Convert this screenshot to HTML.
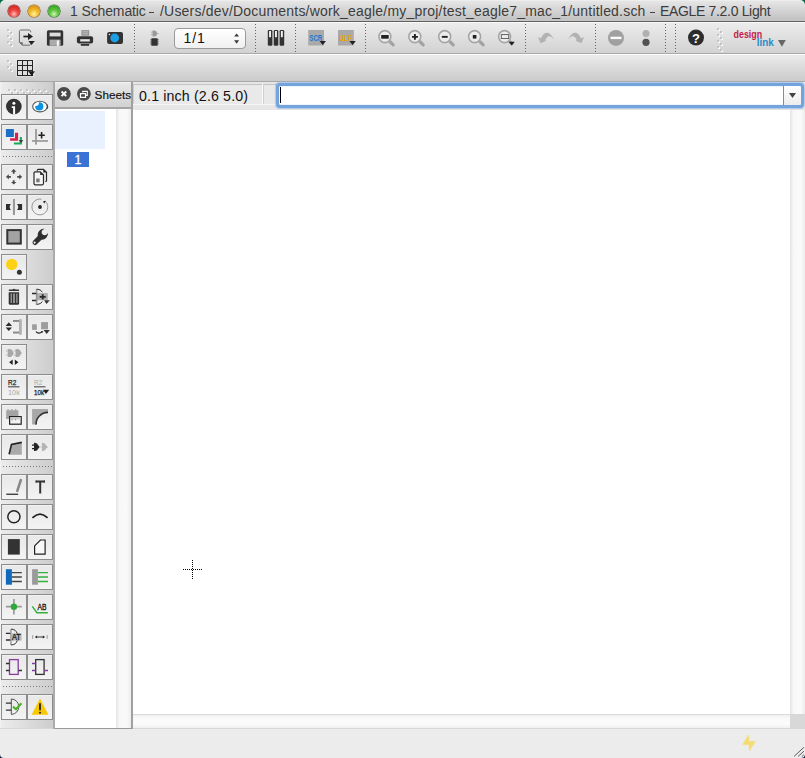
<!DOCTYPE html>
<html><head><meta charset="utf-8"><style>
*{margin:0;padding:0;box-sizing:border-box}
html,body{width:805px;height:758px;overflow:hidden;background:#d8d8d8;font-family:"Liberation Sans", sans-serif}
.a{position:absolute}
.b{position:absolute;width:26px;height:26px;border:1px solid #8c8c8c;background:linear-gradient(#fbfbfb 0,#e9e9e9 1px,#ececec 40%,#f4f4f4 100%)}
.tt{top:2px;font-size:14px;line-height:18px;color:#3c3c3c;white-space:nowrap}
.b svg{position:absolute;left:-1px;top:-1px}
</style></head><body>
<div class="a" style="left:0;top:0;width:5px;height:5px;background:#006a44"></div>
<div class="a" style="left:800px;top:0;width:5px;height:5px;background:#006a44"></div>
<div class="a" style="left:0;top:753px;width:5px;height:5px;background:#0a1e3a"></div>
<div class="a" style="left:800px;top:753px;width:5px;height:5px;background:#0a1e3a"></div>
<div class="a" style="left:0;top:729px;width:805px;height:29px;background:#ececec;border-radius:0 0 4px 4px"></div>
<!-- title bar -->
<div class="a" style="left:0;top:0;width:805px;height:21px;background:linear-gradient(#f4f4f4 0,#e6e6e6 1px,#c2c2c2 95%,#cccccc 100%);border-radius:5px 5px 0 0"></div>
<div class="a" style="left:0;top:21px;width:805px;height:1px;background:#5f5f5f"></div>
<div class="a" style="left:8px;top:5px;width:12px;height:12px;border-radius:50%;background:radial-gradient(circle at 50% 75%,#ffc0c0 0,#f04a44 35%,#c8201c 85%);box-shadow:0 0 0 0.6px #8a2a28"></div>
<div class="a" style="left:28px;top:5px;width:12px;height:12px;border-radius:50%;background:radial-gradient(circle at 50% 75%,#fff4a8 0,#f5c030 35%,#d08a12 85%);box-shadow:0 0 0 0.6px #906010"></div>
<div class="a" style="left:48px;top:5px;width:12px;height:12px;border-radius:50%;background:radial-gradient(circle at 50% 75%,#d0f8b8 0,#66c845 35%,#2d9a20 85%);box-shadow:0 0 0 0.6px #2a6a20"></div>
<div class="a tt" style="left:70px;letter-spacing:-0.12px">1 Schematic</div>
<div class="a" style="left:148.6px;top:12.2px;width:5.2px;height:1.2px;background:#444"></div>
<div class="a tt" style="left:160px;letter-spacing:0.2px">/Users/dev/Documents/work_eagle/my_proj/test_eagle7_mac_1/untitled.sch</div>
<div class="a" style="left:650px;top:12.2px;width:5.2px;height:1.2px;background:#444"></div>
<div class="a tt" style="left:660px;letter-spacing:-0.33px">EAGLE 7.2.0 Light</div>
<!-- toolbar 1 -->
<div class="a" style="left:0;top:22px;width:805px;height:31px;background:linear-gradient(#fbfbfb 0,#fbfbfb 1px,#ececec 1px,#d2d2d2 100%)"></div>
<div class="a" style="left:0;top:53px;width:805px;height:1px;background:#a9a9a9"></div>
<div style="position:absolute;left:134px;top:24px;width:1px;height:28px;background:repeating-linear-gradient(180deg,#666 0 1px,transparent 1px 3px)"></div><div style="position:absolute;left:255px;top:24px;width:1px;height:28px;background:repeating-linear-gradient(180deg,#666 0 1px,transparent 1px 3px)"></div><div style="position:absolute;left:295px;top:24px;width:1px;height:28px;background:repeating-linear-gradient(180deg,#666 0 1px,transparent 1px 3px)"></div><div style="position:absolute;left:365px;top:24px;width:1px;height:28px;background:repeating-linear-gradient(180deg,#666 0 1px,transparent 1px 3px)"></div><div style="position:absolute;left:525px;top:24px;width:1px;height:28px;background:repeating-linear-gradient(180deg,#666 0 1px,transparent 1px 3px)"></div><div style="position:absolute;left:595px;top:24px;width:1px;height:28px;background:repeating-linear-gradient(180deg,#666 0 1px,transparent 1px 3px)"></div><div style="position:absolute;left:665px;top:24px;width:1px;height:28px;background:repeating-linear-gradient(180deg,#666 0 1px,transparent 1px 3px)"></div><div style="position:absolute;left:675px;top:24px;width:1px;height:28px;background:repeating-linear-gradient(180deg,#666 0 1px,transparent 1px 3px)"></div>
<div style="position:absolute;left:7px;top:29px;width:2px;height:2px;background:#c4c4c4;box-shadow:1px 1px 0 #fafafa"></div><div style="position:absolute;left:10px;top:32px;width:2px;height:2px;background:#c4c4c4;box-shadow:1px 1px 0 #fafafa"></div><div style="position:absolute;left:7px;top:35px;width:2px;height:2px;background:#c4c4c4;box-shadow:1px 1px 0 #fafafa"></div><div style="position:absolute;left:10px;top:38px;width:2px;height:2px;background:#c4c4c4;box-shadow:1px 1px 0 #fafafa"></div><div style="position:absolute;left:7px;top:41px;width:2px;height:2px;background:#c4c4c4;box-shadow:1px 1px 0 #fafafa"></div><div style="position:absolute;left:10px;top:44px;width:2px;height:2px;background:#c4c4c4;box-shadow:1px 1px 0 #fafafa"></div>
<div style="position:absolute;left:717px;top:28px;width:2px;height:2px;background:#c4c4c4;box-shadow:1px 1px 0 #fafafa"></div><div style="position:absolute;left:720px;top:31px;width:2px;height:2px;background:#c4c4c4;box-shadow:1px 1px 0 #fafafa"></div><div style="position:absolute;left:717px;top:34px;width:2px;height:2px;background:#c4c4c4;box-shadow:1px 1px 0 #fafafa"></div><div style="position:absolute;left:720px;top:37px;width:2px;height:2px;background:#c4c4c4;box-shadow:1px 1px 0 #fafafa"></div><div style="position:absolute;left:717px;top:40px;width:2px;height:2px;background:#c4c4c4;box-shadow:1px 1px 0 #fafafa"></div><div style="position:absolute;left:720px;top:43px;width:2px;height:2px;background:#c4c4c4;box-shadow:1px 1px 0 #fafafa"></div><div style="position:absolute;left:717px;top:46px;width:2px;height:2px;background:#c4c4c4;box-shadow:1px 1px 0 #fafafa"></div><div style="position:absolute;left:720px;top:49px;width:2px;height:2px;background:#c4c4c4;box-shadow:1px 1px 0 #fafafa"></div>
<div class="a" style="left:174px;top:28px;width:72px;height:21px;border:1px solid #9a9a9a;border-radius:4px;background:linear-gradient(#ffffff,#f0f0f0)"></div>
<div class="a" style="left:183.5px;top:28.5px;font-size:14px;letter-spacing:0.9px;line-height:18px;color:#111">1/1</div>
<svg class="a" style="left:230px;top:31px" width="12" height="14"><path d="M4.1 5.5h5l-2.5-2.9z M4.1 9.2h5l-2.5 3.5z" fill="#3a3a3a"/></svg>

<svg style="position:absolute;left:0;top:22px" width="805" height="31" viewBox="0 22 805 31">
 <!-- open -->
 <path d="M30.6 32.3v-1.2l-1-1.1h-9.2l-1 1.2v11l3 3h7.4l0.8-0.8" fill="none" stroke="#6a6a6a" stroke-width="1"/>
 <path d="M19.3 42.2l3.4 3.3v-3.3z" fill="#666"/>
 <path d="M23.4 36.5h5.2" stroke="#222" stroke-width="1.7"/><path d="M28 33l5 3.5-5 3.6z" fill="#222"/>
 <path d="M28.3 41.1h6.5l-3.3 3.9z" fill="#222"/>
 <!-- save -->
 <rect x="46.9" y="30.2" width="16.3" height="15.6" rx="1.6" fill="#333"/>
 <rect x="49.6" y="32.6" width="11" height="3.8" fill="#dcdcdc"/>
 <rect x="49.6" y="39.6" width="11" height="6.2" fill="#ababab"/><rect x="56.8" y="40.4" width="2.2" height="5.4" fill="#f4f4f4"/>
 <!-- print -->
 <rect x="81.4" y="30.2" width="7.8" height="5.5" fill="#8a8a8a"/><rect x="82.3" y="31.4" width="6" height="1" fill="#c8c8c8"/><rect x="82.3" y="33.4" width="6" height="1" fill="#c8c8c8"/>
 <rect x="76.9" y="36.3" width="16.2" height="7.3" rx="2" fill="#333"/>
 <rect x="80.2" y="39.2" width="9.6" height="2.3" fill="#e8e8e8"/>
 <rect x="80.8" y="44" width="8.4" height="1.8" fill="#333"/>
 <!-- camera -->
 <rect x="107.1" y="32" width="15.9" height="11.9" rx="2" fill="#333"/><circle cx="114.7" cy="38" r="4.4" fill="#1e9fe4"/><circle cx="109.4" cy="34.5" r="0.8" fill="#e8e8e8"/>
 <!-- switch -->
 <path d="M152.5 30.5h1.5a3 3 0 0 1 0 6h-1.5z" fill="#999"/><path d="M150.8 32.2h1.7M150.8 34.8h1.7M157 33.5h1.5" stroke="#999" stroke-width="0.8"/>
 <rect x="151.3" y="38.2" width="6.4" height="7.6" rx="0.6" fill="#333"/><path d="M150.3 39.8h1M150.3 41.8h1M150.3 43.8h1M157.7 39.8h1M157.7 41.8h1M157.7 43.8h1" stroke="#333" stroke-width="0.8"/>
 <!-- library -->
 <rect x="267.8" y="30" width="4.6" height="15.8" rx="1.2" fill="#333"/><rect x="273.7" y="30" width="4.6" height="15.8" rx="1.2" fill="#333"/><rect x="279.6" y="30" width="4.6" height="15.8" rx="1.2" fill="#333"/>
 <rect x="269.1" y="31" width="1.9" height="6.2" fill="#f4f4f4"/><rect x="275" y="31" width="1.9" height="6.2" fill="#f4f4f4"/><rect x="280.9" y="31" width="1.9" height="6.2" fill="#f4f4f4"/>
 <!-- SCR -->
 <rect x="308.2" y="30" width="15.8" height="15.5" fill="#a9a9a9"/>
 <text x="309.3" y="41" font-family="Liberation Sans" font-weight="bold" font-size="9" fill="#1a7ad0" textLength="13" lengthAdjust="spacingAndGlyphs">SCR</text>
 <path d="M319.5 41h6.5l-3.25 4z" fill="#222"/>
 <!-- ULP -->
 <rect x="338" y="30" width="15.8" height="15.5" fill="#a9a9a9"/>
 <text x="339.3" y="41" font-family="Liberation Sans" font-weight="bold" font-size="9" fill="#f39c12" textLength="13" lengthAdjust="spacingAndGlyphs">ULP</text>
 <path d="M349.3 41h6.5l-3.25 4z" fill="#222"/>
 <!-- zooms -->
 <g stroke="#a2a2a2" stroke-width="3.2" stroke-linecap="round"><path d="M390.3 42l2.9 2.8"/><path d="M420.3 42l2.9 2.8"/><path d="M450.3 42l2.9 2.8"/><path d="M480.3 42l2.9 2.8"/><path d="M510.3 42l1.5 1.5"/></g>
 <g fill="#ececec" stroke="#a6a6a6" stroke-width="1.6"><circle cx="384.9" cy="36.6" r="6"/><circle cx="414.8" cy="36.6" r="6"/><circle cx="444.7" cy="36.6" r="6"/><circle cx="474.6" cy="36.6" r="6"/><circle cx="504.6" cy="36.6" r="6"/></g>
 <rect x="381.2" y="35" width="7.5" height="3.7" fill="#222"/>
 <path d="M414.9 34v5.7M412 36.85h5.9" stroke="#222" stroke-width="1.9"/>
 <path d="M441.8 36.85h5.9" stroke="#222" stroke-width="1.9"/>
 <rect x="472.8" y="35" width="3.6" height="3.6" fill="#222"/>
 <rect x="501.3" y="34.6" width="7.4" height="3.9" fill="none" stroke="#555" stroke-width="0.9"/>
 <path d="M508.6 41.8h6.2l-3.1 3.6z" fill="#222"/>
 <!-- undo redo -->
 <g id="undo" fill="#b2b2b2"><path d="M541 39C543 31 550 30 553.9 39.6C550.8 34.8 546.8 34.8 544.8 41.6Z"/><path d="M538 37l2.5 6.2l5.9-2.5z"/></g>
 <g fill="#b2b2b2" transform="matrix(-1 0 0 1 1122 0)"><path d="M541 39C543 31 550 30 553.9 39.6C550.8 34.8 546.8 34.8 544.8 41.6Z"/><path d="M538 37l2.5 6.2l5.9-2.5z"/></g>
 <!-- stop -->
 <circle cx="616" cy="37.9" r="8" fill="#a0a0a0"/><rect x="610.5" y="36.7" width="11" height="2.4" fill="#fafafa"/>
 <!-- go -->
 <circle cx="646" cy="33.5" r="3.5" fill="#b0b0b0"/><circle cx="646" cy="42.3" r="3.6" fill="#525252"/>
 <!-- help -->
 <circle cx="696" cy="37.6" r="8" fill="#2c2c2c"/>
 <text x="696" y="42.5" text-anchor="middle" font-family="Liberation Sans" font-weight="bold" font-size="13" fill="#fff">?</text>
 <!-- designlink -->
 <text x="733.5" y="37.7" font-family="Liberation Sans" font-size="10.5" font-weight="bold" fill="#c41e4a" textLength="28.7" lengthAdjust="spacingAndGlyphs">design</text>
 <text x="756.7" y="45.9" font-family="Liberation Sans" font-size="10.5" font-weight="bold" fill="#2a8ac8" textLength="17" lengthAdjust="spacingAndGlyphs">link</text>
 <path d="M778 40h7.8l-3.9 6.8z" fill="#666"/>
</svg>
<!-- toolbar 2 -->
<div class="a" style="left:0;top:54px;width:805px;height:27px;background:linear-gradient(#fbfbfb 0,#fbfbfb 1px,#ebebeb 1px,#cbcbcb 100%)"></div>
<div class="a" style="left:0;top:81px;width:805px;height:1px;background:#a9a9a9"></div>
<div style="position:absolute;left:7px;top:60px;width:2px;height:2px;background:#c4c4c4;box-shadow:1px 1px 0 #fafafa"></div><div style="position:absolute;left:10px;top:63px;width:2px;height:2px;background:#c4c4c4;box-shadow:1px 1px 0 #fafafa"></div><div style="position:absolute;left:7px;top:66px;width:2px;height:2px;background:#c4c4c4;box-shadow:1px 1px 0 #fafafa"></div><div style="position:absolute;left:10px;top:69px;width:2px;height:2px;background:#c4c4c4;box-shadow:1px 1px 0 #fafafa"></div>
<svg class="a" style="left:16px;top:59px" width="22" height="18" viewBox="16 59 22 18">
 <rect x="16" y="59" width="18" height="18" fill="none" stroke="#f4f4f4" stroke-width="1" opacity="0.6"/>
 <rect x="17" y="60" width="16" height="16" fill="#262626"/>
 <g fill="#dedede"><rect x="18" y="61" width="4" height="4"/><rect x="23" y="61" width="4" height="4"/><rect x="28" y="61" width="4" height="4"/>
 <rect x="18" y="66" width="4" height="4"/><rect x="23" y="66" width="4" height="4"/><rect x="28" y="66" width="4" height="4"/>
 <rect x="18" y="71" width="4" height="4"/><rect x="23" y="71" width="4" height="4"/><rect x="28" y="71" width="4" height="4"/></g>
 <path d="M28 71l7 0.5-3.5 4z" fill="#1a1a1a"/>
</svg>
<!-- left toolbar -->
<div class="a" style="left:0;top:82px;width:53px;height:646px;background:linear-gradient(90deg,#ececec,#cdcdcd)"></div>
<div class="a" style="left:0;top:82px;width:1px;height:646px;background:#f2f2f2"></div>
<div class="a" style="left:53px;top:82px;width:2px;height:647px;background:#ababab"></div>
<div style="position:absolute;left:8px;top:89px;width:2px;height:2px;background:#c4c4c4;box-shadow:1px 1px 0 #fafafa"></div><div style="position:absolute;left:11px;top:92px;width:2px;height:2px;background:#c4c4c4;box-shadow:1px 1px 0 #fafafa"></div><div style="position:absolute;left:14px;top:89px;width:2px;height:2px;background:#c4c4c4;box-shadow:1px 1px 0 #fafafa"></div><div style="position:absolute;left:17px;top:92px;width:2px;height:2px;background:#c4c4c4;box-shadow:1px 1px 0 #fafafa"></div><div style="position:absolute;left:20px;top:89px;width:2px;height:2px;background:#c4c4c4;box-shadow:1px 1px 0 #fafafa"></div><div style="position:absolute;left:23px;top:92px;width:2px;height:2px;background:#c4c4c4;box-shadow:1px 1px 0 #fafafa"></div><div style="position:absolute;left:26px;top:89px;width:2px;height:2px;background:#c4c4c4;box-shadow:1px 1px 0 #fafafa"></div><div style="position:absolute;left:29px;top:92px;width:2px;height:2px;background:#c4c4c4;box-shadow:1px 1px 0 #fafafa"></div><div style="position:absolute;left:32px;top:89px;width:2px;height:2px;background:#c4c4c4;box-shadow:1px 1px 0 #fafafa"></div><div style="position:absolute;left:35px;top:92px;width:2px;height:2px;background:#c4c4c4;box-shadow:1px 1px 0 #fafafa"></div><div style="position:absolute;left:38px;top:89px;width:2px;height:2px;background:#c4c4c4;box-shadow:1px 1px 0 #fafafa"></div><div style="position:absolute;left:41px;top:92px;width:2px;height:2px;background:#c4c4c4;box-shadow:1px 1px 0 #fafafa"></div><div style="position:absolute;left:44px;top:89px;width:2px;height:2px;background:#c4c4c4;box-shadow:1px 1px 0 #fafafa"></div><div style="position:absolute;left:47px;top:92px;width:2px;height:2px;background:#c4c4c4;box-shadow:1px 1px 0 #fafafa"></div>
<div style="position:absolute;left:3px;top:156px;width:50px;height:1px;background:repeating-linear-gradient(90deg,#777 0 1px,transparent 1px 3px)"></div>
<div style="position:absolute;left:3px;top:466px;width:50px;height:1px;background:repeating-linear-gradient(90deg,#777 0 1px,transparent 1px 3px)"></div>
<div style="position:absolute;left:3px;top:686px;width:50px;height:1px;background:repeating-linear-gradient(90deg,#777 0 1px,transparent 1px 3px)"></div>
<div class="b" style="left:1px;top:94px"><svg width="26" height="26" viewBox="0 0 26 26"><circle cx="12.85" cy="12.6" r="7.8" fill="#333"/><circle cx="12.9" cy="9.2" r="1.5" fill="#fff"/><path d="M10.7 12.3 h3.4 v8.2 h-2 v-6.6 h-1.4z" fill="#fff"/></svg></div><div class="b" style="left:27px;top:94px"><svg width="26" height="26" viewBox="0 0 26 26"><mask id="em"><rect width="26" height="26" fill="#fff"/><circle cx="8.6" cy="8.8" r="3.3" fill="#000"/></mask><ellipse cx="12.95" cy="12.55" rx="7.3" ry="5.35" fill="#fff" stroke="#5a5a5a" stroke-width="1.1"/><path d="M20 10.5a7.3 5.35 0 0 1 0 4.2" fill="none" stroke="#444" stroke-width="1.2"/><circle cx="12.3" cy="12.4" r="4.1" fill="#0a93e0" mask="url(#em)"/></svg></div><div class="b" style="left:1px;top:124px"><svg width="26" height="26" viewBox="0 0 26 26"><rect x="4.9" y="5" width="8" height="8" fill="#1f6fc6"/><path d="M14 8.8h3.1v8h-8v-2.5h4.9z" fill="#d6204f"/><path d="M18.8 13h2.1v7.6h-8v-2.1h5.9z" fill="#1fa55a"/><path d="M17.5 16.3h5l-2.5 2.4z" fill="#333"/></svg></div><div class="b" style="left:27px;top:124px"><svg width="26" height="26" viewBox="0 0 26 26"><rect x="8.1" y="5" width="1.8" height="15.6" fill="#999"/><rect x="5" y="16.1" width="16" height="1.7" fill="#999"/><path d="M14.6 8v6.4M11.4 11.2h6.4" stroke="#222" stroke-width="1.6"/></svg></div><div class="b" style="left:1px;top:164px"><svg width="26" height="26" viewBox="0 0 26 26"><g fill="#4a4a4a"><path d="M12.7 5l2.7 2.8h-1.8v1.9h-1.8v-1.9h-1.8z"/><path d="M12.7 20.6l2.7-2.7h-1.8v-1.7h-1.8v1.7h-1.8z"/><path d="M5 12.8l2.8-2.6v1.7h2.1v1.8h-2.1v1.7z"/><path d="M21.1 12.8l-2.8-2.6v1.7h-2.1v1.8h2.1v1.7z"/></g></svg></div><div class="b" style="left:27px;top:164px"><svg width="26" height="26" viewBox="0 0 26 26"><path d="M10.2 6.8v-0.3a1.2 1.2 0 0 1 1.2-1.2h5.1l3 3v8.6l-1 0.8" fill="none" stroke="#2a2a2a" stroke-width="1.2"/><path d="M16.3 5.4l3.2 3.2h-3.2z" fill="#2a2a2a"/><path d="M8.2 7.8h5l3.3 3.3v8.5a1.2 1.2 0 0 1-1.2 1.2h-7.1a1.2 1.2 0 0 1-1.2-1.2v-10.6a1.2 1.2 0 0 1 1.2-1.2z" fill="#f6f6f6" stroke="#2a2a2a" stroke-width="1.2"/><path d="M13.2 7.8l3.3 3.3h-3.3z" fill="#2a2a2a"/><rect x="9.2" y="14.5" width="3.4" height="3.8" fill="#7a7a7a"/></svg></div><div class="b" style="left:1px;top:194px"><svg width="26" height="26" viewBox="0 0 26 26"><rect x="11.9" y="5" width="2.1" height="16" fill="#9a9a9a"/><path d="M5 10h4.9a4.5 4.5 0 0 0 0 5.9h-4.9z" fill="#2e2e2e"/><path d="M21.1 10h-5.1a4.5 4.5 0 0 1 0 5.9h5.1z" fill="#2e2e2e"/></svg></div><div class="b" style="left:27px;top:194px"><svg width="26" height="26" viewBox="0 0 26 26"><path d="M14.4 5.2a7.9 7.9 0 1 0 4.7 2.9" fill="none" stroke="#8a8a8a" stroke-width="0.9"/><circle cx="13" cy="13" r="1.9" fill="#222"/><path d="M16.2 7.2l2.9-0.4-2 2.7z" fill="#111"/></svg></div><div class="b" style="left:1px;top:224px"><svg width="26" height="26" viewBox="0 0 26 26"><rect x="6.3" y="6.1" width="13.5" height="13.5" fill="#a2a2a2" stroke="#333" stroke-width="2"/></svg></div><div class="b" style="left:27px;top:224px"><svg width="26" height="26" viewBox="0 0 26 26"><path d="M19.2 5.2a6.2 6.2 0 0 0-8.4 6.9l-4.8 5a2.5 2.5 0 0 0 3.5 3.5l5-4.9a6.2 6.2 0 0 0 6.5-6.9a3.4 3.4 0 0 1-6.3 0.4a3.4 3.4 0 0 1 4.5-4z" fill="#2e2e2e"/><circle cx="7.6" cy="18.6" r="1.1" fill="#f4f4f4"/></svg></div><div class="b" style="left:1px;top:254px"><svg width="26" height="26" viewBox="0 0 26 26"><circle cx="10.7" cy="10.4" r="5.7" fill="#fcd116"/><circle cx="18.4" cy="18.3" r="2.5" fill="#333"/></svg></div><div class="b" style="left:1px;top:284px"><svg width="26" height="26" viewBox="0 0 26 26"><rect x="7.8" y="5.6" width="10.3" height="1.3" rx="0.5" fill="#333"/><rect x="11.8" y="4.9" width="2.4" height="1" fill="#333"/><path d="M7.7 8.2h10.4v11a1.5 1.5 0 0 1-1.5 1.5h-7.4a1.5 1.5 0 0 1-1.5-1.5z" fill="#333"/><rect x="9.7" y="9.5" width="1" height="9.5" fill="#bbb"/><rect x="12.1" y="9.5" width="1.8" height="9.5" fill="#999"/><rect x="15.4" y="9.5" width="1" height="9.5" fill="#bbb"/></svg></div><div class="b" style="left:27px;top:284px"><svg width="26" height="26" viewBox="0 0 26 26"><rect x="10" y="9.1" width="10.8" height="7.1" fill="#b0b0b0"/><path d="M9.6 5v15.6" stroke="#999" stroke-width="1.6"/><path d="M9.6 5.2h0.8a7 7.6 0 0 1 5 2.8M9.6 20.4h0.8a7 7.6 0 0 0 5-2.8" fill="none" stroke="#2a2a2a" stroke-width="1"/><path d="M5 9.5h4.2M5 16.4h4.2" stroke="#2a2a2a" stroke-width="1.5"/><path d="M15.7 10.2v5.4M12.7 12.9h6" stroke="#2a2a2a" stroke-width="1.8"/><path d="M17.1 16.2h5.7l-3.3 3.8z" fill="#333"/></svg></div><div class="b" style="left:1px;top:314px"><svg width="26" height="26" viewBox="0 0 26 26"><path d="M7.8 8.3l3.2 3.6h-6.4z M7.8 17l3.2-3.4h-6.4z" fill="#2a2a2a"/><rect x="12" y="6" width="6" height="1.9" fill="#888"/><rect x="12" y="17.6" width="6" height="1.9" fill="#888"/><rect x="18" y="5.2" width="2.8" height="15.5" fill="#b0b0b0"/></svg></div><div class="b" style="left:27px;top:314px"><svg width="26" height="26" viewBox="0 0 26 26"><rect x="5.1" y="10.3" width="4.7" height="5.6" fill="#9c9c9c"/><rect x="14.1" y="8.1" width="6.9" height="7.2" fill="#9c9c9c"/><path d="M8.9 17.6q3 3.2 6.3 0" fill="none" stroke="#222" stroke-width="1.3"/><path d="M14 17l2.2 0.2-1 1.8z" fill="#222"/><path d="M16.6 15.9h6.2l-3.1 4z" fill="#333"/></svg></div><div class="b" style="left:1px;top:344px"><svg width="26" height="26" viewBox="0 0 26 26"><path d="M6.7 4.9h1.5a4.1 4.1 0 0 1 3.9 3.1l0.7 1l-0.7 1a4.1 4.1 0 0 1-3.9 3.1h-1.5z M14.5 4.9h1.5a4.1 4.1 0 0 1 3.9 3.1l1.1 1l-1.1 1a4.1 4.1 0 0 1-3.9 3.1h-1.5z" fill="#a8a8a8"/><path d="M4.9 7h1.8M4.9 11h1.8M12.7 7h1.8M12.7 11h1.8" stroke="#b8b8b8" stroke-width="1"/><path d="M11.7 15.6v5.4l-3.6-2.7z M13.8 15.6v5.4l3.6-2.7z" fill="#222"/></svg></div><div class="b" style="left:1px;top:374px"><svg width="26" height="26" viewBox="0 0 26 26"><text x="7" y="10.5" font-size="7.3" font-family="Liberation Sans" fill="#222" stroke="#222" stroke-width="0.25" textLength="8.2" lengthAdjust="spacingAndGlyphs">R2</text><rect x="7" y="12" width="11.5" height="1.5" fill="#777"/><text x="7" y="20.9" font-size="7.6" font-family="Liberation Sans" fill="#aaa" textLength="11.8" lengthAdjust="spacingAndGlyphs">10k</text></svg></div><div class="b" style="left:27px;top:374px"><svg width="26" height="26" viewBox="0 0 26 26"><text x="7" y="10.5" font-size="7.3" font-family="Liberation Sans" fill="#aaa" textLength="8.2" lengthAdjust="spacingAndGlyphs">R2</text><rect x="7" y="12" width="11.5" height="1.5" fill="#777"/><text x="7" y="20.9" font-size="7.6" font-family="Liberation Sans" fill="#111" stroke="#111" stroke-width="0.25" textLength="10" lengthAdjust="spacingAndGlyphs">10k</text><path d="M15.8 15.8h6.4l-3.3 4.3z" fill="#222"/></svg></div><div class="b" style="left:1px;top:404px"><svg width="26" height="26" viewBox="0 0 26 26"><path d="M5.3 6.2h1.2v-1.1h1.2v1.1h2.6v-1.1h1.2v1.1h2.6v-1.1h1.2v1.1h2.1v8.8h-12.3z" fill="#a4a4a4"/><rect x="8.6" y="12.6" width="11.6" height="7.6" fill="#f2f2f2" stroke="#222" stroke-width="1.2"/><path d="M9.2 13.2h10.4v2h-10.4z" fill="#c8c8c8"/><rect x="10.3" y="15" width="1.3" height="1.3" fill="#999"/><rect x="13.9" y="15" width="1.3" height="1.3" fill="#999"/></svg></div><div class="b" style="left:27px;top:404px"><svg width="26" height="26" viewBox="0 0 26 26"><path d="M5.1 5.1h15.9v3.1a11.9 11.9 0 0 0-11.9 12.4h-4z" fill="#a8a8a8"/><path d="M9.1 20.6a11.9 11.5 0 0 1 11.9-12.2" fill="none" stroke="#333" stroke-width="1.6"/></svg></div><div class="b" style="left:1px;top:434px"><svg width="26" height="26" viewBox="0 0 26 26"><path d="M10.5 10.4l10.3-2v12.3h-12.5z" fill="#aaa"/><path d="M8.1 20.3l2.4-9.9l10.3-2" fill="none" stroke="#222" stroke-width="1.6"/></svg></div><div class="b" style="left:27px;top:434px"><svg width="26" height="26" viewBox="0 0 26 26"><path d="M7 8.8h0.8a3.9 4.1 0 0 1 3.6 2.6l1.3 1.55-1.3 1.55a3.9 4.1 0 0 1-3.6 2.5h-0.8z" fill="#262626"/><path d="M5 11.2h2.2M5 14.7h2.2" stroke="#262626" stroke-width="1.3"/><path d="M12.7 12.95h2.2" stroke="#ccc" stroke-width="1"/><path d="M14.9 8.8h0.8a3.9 4.1 0 0 1 3.5 2.6l1.8 1.55-1.8 1.55a3.9 4.1 0 0 1-3.5 2.5h-0.8z" fill="#b4b4b4"/></svg></div><div class="b" style="left:1px;top:474px"><svg width="26" height="26" viewBox="0 0 26 26"><rect x="5.3" y="19.6" width="11.9" height="1.3" fill="#333"/><path d="M19.8 6.2l-3.5 10.6" stroke="#888" stroke-width="2.6" stroke-linecap="round"/></svg></div><div class="b" style="left:27px;top:474px"><svg width="26" height="26" viewBox="0 0 26 26"><path d="M9 7.5h8.4M13.2 7.5v11.9" stroke="#333" stroke-width="2"/><path d="M9 6.3v2.5M17.4 6.3v2.5" stroke="#333" stroke-width="1"/></svg></div><div class="b" style="left:1px;top:504px"><svg width="26" height="26" viewBox="0 0 26 26"><circle cx="12.9" cy="12.75" r="6.1" fill="none" stroke="#222" stroke-width="1.5"/></svg></div><div class="b" style="left:27px;top:504px"><svg width="26" height="26" viewBox="0 0 26 26"><path d="M6 13.4q7-6.6 14 0" fill="none" stroke="#222" stroke-width="1.8" stroke-linecap="round"/></svg></div><div class="b" style="left:1px;top:534px"><svg width="26" height="26" viewBox="0 0 26 26"><rect x="6.9" y="5.1" width="11.9" height="15.5" fill="#333"/></svg></div><div class="b" style="left:27px;top:534px"><svg width="26" height="26" viewBox="0 0 26 26"><path d="M7.6 11.9l5.9-5.9h4.6v14.1h-10.5z" fill="#f8f8f8" stroke="#222" stroke-width="1.2"/></svg></div><div class="b" style="left:1px;top:564px"><svg width="26" height="26" viewBox="0 0 26 26"><rect x="4.9" y="5.2" width="6" height="15.5" fill="#1169bd"/><path d="M10.9 8.55h9.9M10.9 13h9.9M10.9 17.5h9.9" stroke="#444" stroke-width="1.3"/></svg></div><div class="b" style="left:27px;top:564px"><svg width="26" height="26" viewBox="0 0 26 26"><rect x="5.1" y="5.2" width="5.8" height="15.5" fill="#9a9a9a"/><path d="M10.9 8.55h10.1M10.9 13h10.1M10.9 17.5h10.1" stroke="#35b03b" stroke-width="1.3"/></svg></div><div class="b" style="left:1px;top:594px"><svg width="26" height="26" viewBox="0 0 26 26"><path d="M4.9 12.65h15.9M12.9 5.1v15.5" stroke="#9a9a9a" stroke-width="1.7"/><circle cx="12.9" cy="12.65" r="3.2" fill="#2ea83a"/></svg></div><div class="b" style="left:27px;top:594px"><svg width="26" height="26" viewBox="0 0 26 26"><path d="M5.3 12.4l4.6 6.3h11" fill="none" stroke="#35b03b" stroke-width="1.5"/><text x="10.5" y="16" font-size="8.4" font-family="Liberation Sans" fill="#1a1a1a" stroke="#1a1a1a" stroke-width="0.35" textLength="9" lengthAdjust="spacingAndGlyphs">AB</text></svg></div><div class="b" style="left:1px;top:624px"><svg width="26" height="26" viewBox="0 0 26 26"><rect x="10.5" y="9.5" width="10.1" height="7.1" fill="#b8b8b8"/><path d="M9.9 5.2v15.7" stroke="#999" stroke-width="1.4"/><path d="M9.9 5.2h0.6a6.4 7.8 0 0 1 5.8 4.3M9.9 20.9h0.6a6.4 7.8 0 0 0 5.8-4.3" fill="none" stroke="#2a2a2a" stroke-width="1"/><path d="M4.9 9.3h4.4M4.9 16h4.4" stroke="#2a2a2a" stroke-width="1.3"/><text x="11" y="16.3" font-size="8.2" font-family="Liberation Sans" fill="#1a1a1a" stroke="#1a1a1a" stroke-width="0.3" textLength="8.8" lengthAdjust="spacingAndGlyphs">AT</text></svg></div><div class="b" style="left:27px;top:624px"><svg width="26" height="26" viewBox="0 0 26 26"><rect x="5.2" y="11.2" width="1" height="3.6" fill="#999"/><rect x="19.7" y="11.2" width="1" height="3.6" fill="#999"/><path d="M9.5 13h7" stroke="#8a8a8a" stroke-width="1.8"/><path d="M7.8 13l2.3-1.6v3.2z M18.1 13l-2.3-1.6v3.2z" fill="#2a2a2a"/></svg></div><div class="b" style="left:1px;top:654px"><svg width="26" height="26" viewBox="0 0 26 26"><rect x="8.5" y="5.6" width="8.7" height="14.8" fill="none" stroke="#8a3aa0" stroke-width="1.3"/><path d="M4.9 9.4h3.6M4.9 16.5h3.6M17.4 16.5h3.6" stroke="#333" stroke-width="1.5"/></svg></div><div class="b" style="left:27px;top:654px"><svg width="26" height="26" viewBox="0 0 26 26"><rect x="8.7" y="5.6" width="8.4" height="14.8" fill="none" stroke="#333" stroke-width="1.3"/><path d="M5 9.4h3.4M5 16.5h3.4M17.1 16.5h3.9" stroke="#8a3aa0" stroke-width="1.5"/></svg></div><div class="b" style="left:1px;top:694px"><svg width="26" height="26" viewBox="0 0 26 26"><path d="M10.3 5v15.4M10.3 5a7.5 7.7 0 0 1 0 15.4" fill="none" stroke="#444" stroke-width="0.9"/><path d="M4.9 9.1h5.4M4.9 16.2h5.4" stroke="#333" stroke-width="1.2"/><path d="M12 12.7l3 2.6l5.4-6" fill="none" stroke="#4cb42c" stroke-width="2.2"/></svg></div><div class="b" style="left:27px;top:694px"><svg width="26" height="26" viewBox="0 0 26 26"><path d="M13 4.9l8 15.6h-16z" fill="#f8c800" stroke="#f8c800" stroke-width="0.5" stroke-linejoin="round"/><rect x="12.1" y="9.1" width="1.8" height="7.4" rx="0.9" fill="#1c2238"/><circle cx="13" cy="18.7" r="1" fill="#1c2238"/></svg></div>
<!-- sheets panel -->
<div class="a" style="left:55px;top:82px;width:76px;height:25px;background:linear-gradient(#f4f4f4 0,#e6e6e6 2px,#d2d2d2 100%)"></div>
<div class="a" style="left:55px;top:107px;width:76px;height:2px;background:#a4a4a4"></div>
<div class="a" style="left:131px;top:82px;width:2px;height:647px;background:#a0a0a0"></div>
<div class="a" style="left:55px;top:109px;width:76px;height:619px;background:#fff"></div>
<div class="a" style="left:55px;top:728px;width:78px;height:1px;background:#9a9a9a"></div>
<div class="a" style="left:55px;top:111px;width:50px;height:38px;background:#e8f1fd"></div>
<div class="a" style="left:67px;top:152px;width:22px;height:15px;background:#3a72d6;color:#fff;font-size:12.5px;line-height:16px;text-align:center;-webkit-text-stroke:0.3px #fff">1</div>
<div class="a" style="left:116px;top:109px;width:15px;height:619px;background:linear-gradient(90deg,#e4e4e4,#f8f8f8 25%,#fafafa 70%,#ededed)"></div>
<svg class="a" style="left:55px;top:84px" width="40" height="20" viewBox="55 84 40 20">
 <circle cx="63.9" cy="93.8" r="6.9" fill="#4a4a4a"/><path d="M61.6 91.5l4.6 4.6M66.2 91.5l-4.6 4.6" stroke="#fff" stroke-width="1.9"/>
 <circle cx="83.9" cy="93.8" r="6.9" fill="#4a4a4a"/>
 <path d="M82.7 92.6v-1.2h4.6v4h-1.6" fill="none" stroke="#fff" stroke-width="1.1"/><rect x="80.5" y="93.6" width="5" height="3.8" fill="none" stroke="#fff" stroke-width="1.2"/>
</svg>
<div class="a" style="left:94.6px;top:86.5px;font-size:11.7px;line-height:16px;color:#111;-webkit-text-stroke:0.15px #111">Sheets</div>
<!-- coord bar -->
<div class="a" style="left:133px;top:82px;width:672px;height:28px;background:#e6e6e6"></div>
<div class="a" style="left:133px;top:84px;width:129px;height:21px;background:#e9e9e9;border-top:1px solid #c4c4c4;border-left:1px solid #d0d0d0"></div>
<div class="a" style="left:262px;top:84px;width:1px;height:21px;background:#fafafa"></div>
<div class="a" style="left:263px;top:84px;width:14px;height:21px;background:#e9e9e9;border-top:1px solid #c4c4c4;border-left:1px solid #d0d0d0"></div>
<div class="a" style="left:133px;top:104px;width:672px;height:1px;background:#f6f6f6"></div>
<div class="a" style="left:139px;top:86.5px;font-size:14.2px;letter-spacing:0.15px;line-height:18px;color:#111;white-space:nowrap">0.1 inch (2.6 5.0)</div>
<div class="a" style="left:276px;top:83px;width:528px;height:25px;border-radius:4px;background:#fff;border:3px solid #74a4de;box-shadow:0 0 1px 0.5px rgba(140,180,235,0.6), inset 0 0 1px #5a8ad0"></div>
<div class="a" style="left:280px;top:87px;width:1.3px;height:16px;background:#000"></div>
<div class="a" style="left:783px;top:86px;width:18px;height:19px;background:linear-gradient(#ffffff,#ececec);border-left:1px solid #8a8a8a;border-radius:0 2px 2px 0"></div>
<svg class="a" style="left:788px;top:92px" width="9" height="7"><path d="M1 1h7l-3.5 5z" fill="#444"/></svg>
<!-- canvas -->
<div class="a" style="left:133px;top:110px;width:657px;height:604px;background:#fff"></div>
<div class="a" style="left:790px;top:110px;width:15px;height:604px;background:linear-gradient(90deg,#e4e4e4,#f8f8f8 25%,#fafafa 70%,#ededed)"></div>
<div class="a" style="left:133px;top:714px;width:657px;height:1px;background:#dadada"></div>
<div class="a" style="left:133px;top:715px;width:657px;height:13px;background:linear-gradient(#f0f0f0,#fafafa 30%,#fbfbfb 70%,#f0f0f0)"></div>
<svg class="a" style="left:180px;top:556px" width="26" height="26" viewBox="180 556 26 26">
 <g fill="#000"><rect x="183" y="569" width="1" height="1"/><rect x="185" y="569" width="1" height="1"/><rect x="187" y="569" width="1" height="1"/><rect x="189" y="569" width="1" height="1"/><rect x="195" y="569" width="1" height="1"/><rect x="197" y="569" width="1" height="1"/><rect x="199" y="569" width="1" height="1"/><rect x="201" y="569" width="1" height="1"/>
 <rect x="192" y="560" width="1" height="1"/><rect x="192" y="562" width="1" height="1"/><rect x="192" y="564" width="1" height="1"/><rect x="192" y="566" width="1" height="1"/><rect x="192" y="572" width="1" height="1"/><rect x="192" y="574" width="1" height="1"/><rect x="192" y="576" width="1" height="1"/><rect x="192" y="578" width="1" height="1"/></g>
 <rect x="191" y="569" width="1" height="1"/><rect x="193" y="569" width="1" height="1"/><rect x="192" y="568" width="1" height="1"/><rect x="192" y="570" width="1" height="1"/>
</svg>
<!-- status bar -->
<svg class="a" style="left:740px;top:732px" width="18" height="20" viewBox="740 732 18 20"><path d="M748.5 735.1L742.7 744.6H749L749.4 750.8L755.3 741.4H749z" fill="#f5dc72" stroke="#f5dc72" stroke-width="0.6" stroke-linejoin="round"/></svg>
<svg class="a" style="left:790px;top:744px" width="15" height="14" viewBox="790 744 15 14"><path d="M794.1 756.4L803.9 747.3M798.2 756.4L803.9 751.2" stroke="#5a5a5a" stroke-width="1"/><path d="M801.8 756.6l2-1.8" stroke="#5a5a5a" stroke-width="1"/></svg>
</body></html>
